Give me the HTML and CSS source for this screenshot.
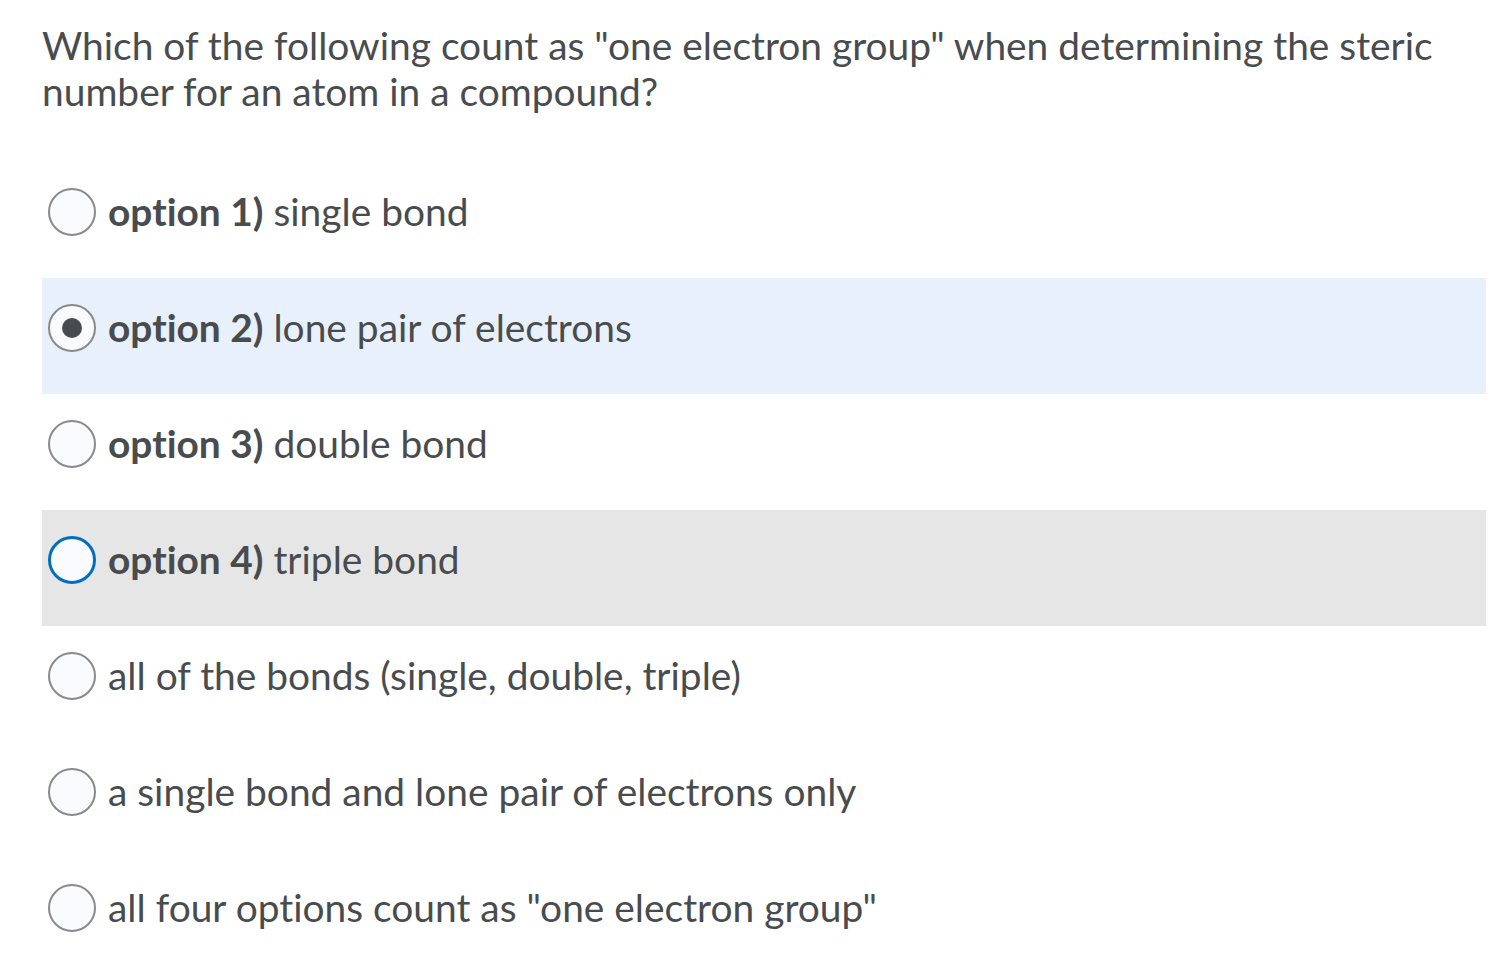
FILE: index.html
```html
<!DOCTYPE html>
<html lang="en">
<head>
    <meta charset="UTF-8">
    <title>Question</title>
    <link rel="stylesheet" href="styles.css">
</head>
<body>
    <div class="quiz">
        <p class="question">Which of the following count as "one electron group" when determining the steric number for an atom in a compound?</p>

        <div class="choices">
            <label class="choice">
                <span class="radio"></span>
                <span class="text"><strong>option 1)</strong> single bond</span>
            </label>
            <label class="choice selected">
                <span class="radio checked"></span>
                <span class="text"><strong>option 2)</strong> lone pair of electrons</span>
            </label>
            <label class="choice">
                <span class="radio"></span>
                <span class="text"><strong>option 3)</strong> double bond</span>
            </label>
            <label class="choice hover">
                <span class="radio focus"></span>
                <span class="text"><strong>option 4)</strong> triple bond</span>
            </label>
            <label class="choice">
                <span class="radio"></span>
                <span class="text">all of the bonds (single, double, triple)</span>
            </label>
            <label class="choice">
                <span class="radio"></span>
                <span class="text">a single bond and lone pair of electrons only</span>
            </label>
            <label class="choice">
                <span class="radio"></span>
                <span class="text">all four options count as "one electron group"</span>
            </label>
        </div>
    </div>
</body>
</html>
```

FILE: styles.css
```css
body {
    margin: 0;
    background: #fff;
    font-family: Lato, "Open Sans", sans-serif;
    font-variant-ligatures: none;
    color: #494c4e;
}
.quiz {
    padding: 22px 16px 0 42px;
}
.question {
    margin: 0 0 48px 0;
    font-size: 38.9px;
    line-height: 46px;
}
.choices {
    display: flex;
    flex-direction: column;
}
.choice {
    display: flex;
    align-items: center;
    gap: 12px;
    height: 116px;
    box-sizing: border-box;
    padding: 0 0 16px 6px;
    font-size: 38.9px;
    line-height: 46px;
}
.choice .text {
    padding-bottom: 3px;
}
.choice strong {
    font-weight: 700;
}
.choice.selected {
    background: #e8f0fb;
}
.choice.hover {
    background: #e6e6e6;
}
.radio {
    flex: none;
    width: 48px;
    height: 48px;
    box-sizing: border-box;
    border: 2px solid #8a8a8a;
    border-radius: 50%;
    background: #f9fbff;
    display: flex;
    align-items: center;
    justify-content: center;
}
.radio.checked::after {
    content: "";
    width: 20px;
    height: 20px;
    border-radius: 50%;
    background: #494c4e;
}
.radio.focus {
    border: 3px solid #006fbf;
}
```
